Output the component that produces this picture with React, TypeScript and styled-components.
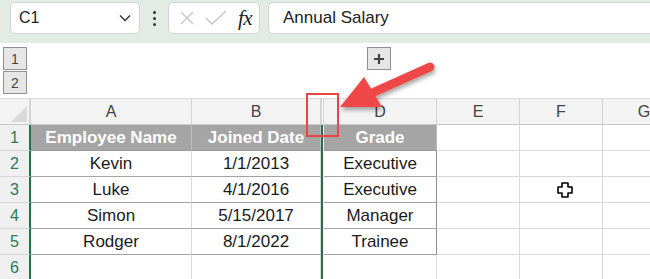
import { Fragment } from 'react';
import styled, { createGlobalStyle } from 'styled-components';

const GlobalStyle = createGlobalStyle`
  html, body {
    margin: 0;
    padding: 0;
    background: #ffffff;
    overflow: hidden;
  }
  * {
    box-sizing: border-box;
  }
`;

const Page = styled.div`
  position: relative;
  width: 650px;
  height: 279px;
  overflow: hidden;
  font-family: 'Liberation Sans', Arial, sans-serif;
  color: #1a1a1a;
`;

const FormulaBar = styled.div`
  display: flex;
  align-items: flex-start;
  height: 43px;
  padding: 2px 0 0 10px;
  background: #e2ece5;
`;

const Box = styled.div<{ $width?: number }>`
  display: flex;
  align-items: center;
  height: 32px;
  width: ${(p) => (p.$width ? `${p.$width}px` : 'auto')};
  flex: ${(p) => (p.$width ? 'none' : '1')};
  background: #ffffff;
  border: 1px solid #cfd6d1;
  border-radius: 5px;
`;

const NameText = styled.span`
  flex: 1;
  padding-left: 8px;
  font-size: 16px;
  color: #222;
`;

const Chevron = styled.svg`
  margin-right: 8px;
`;

const DotsWrap = styled.div`
  width: 28px;
  height: 32px;
  display: flex;
  flex-direction: column;
  align-items: center;
  justify-content: center;
  gap: 3px;
`;

const Dot = styled.span`
  width: 3px;
  height: 3px;
  border-radius: 50%;
  background: #333;
`;

const FxButtons = styled.div`
  display: flex;
  align-items: center;
  gap: 10px;
  padding-left: 10px;
`;

const FxLabel = styled.span`
  font-family: 'Liberation Serif', 'Times New Roman', serif;
  font-style: italic;
  font-size: 21px;
  color: #222;
  margin-left: 1px;
  letter-spacing: -0.5px;
`;

const FormulaInput = styled(Box)`
  margin-left: 8px;
  border-right: none;
  border-radius: 5px 0 0 5px;
  padding-left: 14px;
  font-size: 17px;
  color: #222;
`;

const OutlineArea = styled.div`
  display: flex;
  align-items: flex-start;
  height: 55px;
  padding: 4px 0 0 3px;
`;

const LevelColumn = styled.div`
  display: flex;
  flex-direction: column;
  gap: 1px;
`;

const OutlineButton = styled.div<{ $ml?: number }>`
  width: 24px;
  height: 23px;
  margin-left: ${(p) => p.$ml ?? 0}px;
  display: flex;
  align-items: center;
  justify-content: center;
  background: #e6e6e6;
  border: 1px solid #8f8f8f;
  font-size: 14px;
  color: #444;
`;

const Grid = styled.div`
  display: grid;
  grid-template-columns: 31px 161px 129px 3px 113px 83px 83px 83px;
  grid-auto-rows: 26px;
  border-top: 1px solid #dcdcdc;
`;

const Cell = styled.div`
  display: flex;
  align-items: center;
  justify-content: center;
  font-size: 17px;
  border-right: 1px solid #dadada;
  border-bottom: 1px solid #dadada;
  background: #ffffff;
`;

const ColHead = styled(Cell)`
  background: #f3f3f3;
  color: #444;
  font-size: 16px;
  border-right-color: #d4d4d4;
  border-bottom-color: #c8c8c8;
`;

const Corner = styled(ColHead)`
  position: relative;
  border-right: 2px solid #d4d4d4;
`;

const CornerTriangle = styled.svg`
  position: absolute;
  right: 2px;
  bottom: 2px;
`;

const HiddenHead = styled(ColHead)`
  border-left: 1px solid #d4d4d4;
  background: #ffffff;
`;

const RowHead = styled(Cell)`
  background: #f0f0f0;
  color: #2a7a55;
  font-size: 16px;
  border-right: 2px solid #217346;
  border-bottom-color: #d6d6d6;
`;

const TableHead = styled(Cell)`
  background: #a5a5a5;
  color: #ffffff;
  font-weight: bold;
  border-right-color: #bcbcbc;
  border-bottom-color: #9a9a9a;
`;

const TableCell = styled(Cell)<{ $edge?: boolean }>`
  border-bottom-color: #a3a3a3;
  border-right-color: ${(p) => (p.$edge ? '#8f8f8f' : '#d9d9d9')};
`;

const HiddenCell = styled(Cell)`
  border-right: none;
  border-bottom: none;
  background: linear-gradient(to right, #217346 2px, #ffffff 2px);
`;

const Overlay = styled.svg`
  position: absolute;
  left: 0;
  top: 0;
  pointer-events: none;
`;

const Highlight = styled.div`
  position: absolute;
  left: 306px;
  top: 93px;
  width: 33px;
  height: 44px;
  border: 2px solid #e84545;
`;

const rows = [
  ['Kevin', '1/1/2013', 'Executive'],
  ['Luke', '4/1/2016', 'Executive'],
  ['Simon', '5/15/2017', 'Manager'],
  ['Rodger', '8/1/2022', 'Trainee'],
];

export default function App() {
  return (
    <Page>
      <GlobalStyle />
      <FormulaBar>
        <Box $width={130}>
          <NameText>C1</NameText>
          <Chevron width="12" height="8" viewBox="0 0 12 8">
            <path d="M1 1.5 L6 6.5 L11 1.5" fill="none" stroke="#333" strokeWidth="1.4" />
          </Chevron>
        </Box>
        <DotsWrap>
          <Dot />
          <Dot />
          <Dot />
        </DotsWrap>
        <Box $width={92}>
          <FxButtons>
            <svg width="16" height="16" viewBox="0 0 16 16">
              <path d="M2 2 L14 14 M14 2 L2 14" stroke="#c4c4c4" strokeWidth="1.3" />
            </svg>
            <svg width="22" height="16" viewBox="0 0 22 16">
              <path d="M1 8 L7 14 L21 1" fill="none" stroke="#c4c4c4" strokeWidth="1.3" />
            </svg>
            <FxLabel>fx</FxLabel>
          </FxButtons>
        </Box>
        <FormulaInput>Annual Salary</FormulaInput>
      </FormulaBar>

      <OutlineArea>
        <LevelColumn>
          <OutlineButton>1</OutlineButton>
          <OutlineButton>2</OutlineButton>
        </LevelColumn>
        <OutlineButton $ml={340}>
          <svg width="12" height="12" viewBox="0 0 12 12">
            <path d="M6 1 V11 M1 6 H11" stroke="#444" strokeWidth="2.2" />
          </svg>
        </OutlineButton>
      </OutlineArea>

      <Grid>
        <Corner>
          <CornerTriangle width="16" height="16" viewBox="0 0 16 16">
            <path d="M16 0 L16 16 L0 16 Z" fill="#d9d9d9" />
          </CornerTriangle>
        </Corner>
        <ColHead>A</ColHead>
        <ColHead>B</ColHead>
        <HiddenHead />
        <ColHead>D</ColHead>
        <ColHead>E</ColHead>
        <ColHead>F</ColHead>
        <ColHead>G</ColHead>

        <RowHead>1</RowHead>
        <TableHead>Employee Name</TableHead>
        <TableHead>Joined Date</TableHead>
        <HiddenCell />
        <TableHead>Grade</TableHead>
        <Cell />
        <Cell />
        <Cell />

        {rows.map((r, i) => (
          <Fragment key={r[0]}>
            <RowHead>{i + 2}</RowHead>
            <TableCell>{r[0]}</TableCell>
            <TableCell>{r[1]}</TableCell>
            <HiddenCell />
            <TableCell $edge>{r[2]}</TableCell>
            <Cell />
            <Cell />
            <Cell />
          </Fragment>
        ))}

        <RowHead>6</RowHead>
        <Cell />
        <Cell />
        <HiddenCell />
        <Cell />
        <Cell />
        <Cell />
        <Cell />
      </Grid>

      <Highlight />

      <Overlay width="650" height="279" viewBox="0 0 650 279">
        <defs>
          <filter id="shadow" x="-20%" y="-20%" width="140%" height="160%">
            <feDropShadow dx="1" dy="3" stdDeviation="2" floodColor="#000" floodOpacity="0.35" />
          </filter>
        </defs>
        <g filter="url(#shadow)">
          <line x1="430" y1="67" x2="372" y2="93" stroke="#ef4747" strokeWidth="9" strokeLinecap="round" />
          <path d="M340 107 L364 77 L382 107 Z" fill="#ef4747" />
        </g>
        {/* excel fat-cross cursor */}
        <path
          d="M562 183 H568 V187 H572 V193 H568 V197 H562 V193 H558 V187 H562 Z"
          fill="#ffffff"
          stroke="#000"
          strokeWidth="1.6"
          strokeLinejoin="round"
        />
      </Overlay>
    </Page>
  );
}
